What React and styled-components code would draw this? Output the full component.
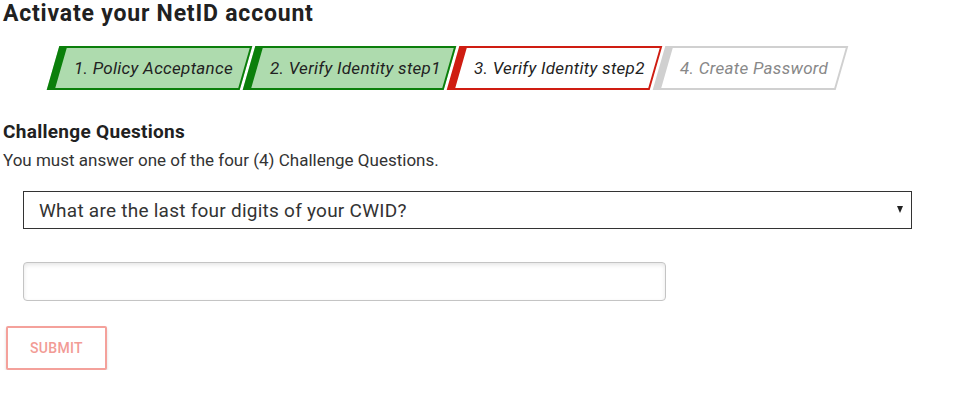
import React from "react";
import styled, { createGlobalStyle } from "styled-components";

const GlobalStyle = createGlobalStyle`
  body {
    margin: 0;
    background: #fff;
    font-family: Roboto, "Liberation Sans", Arial, sans-serif;
    color: #222;
  }
`;

const Page = styled.div`
  padding: 0 0 0 3px;
`;

const Title = styled.h1`
  margin: 0;
  font-size: 23px;
  line-height: 27px;
  font-weight: 700;
  letter-spacing: 0.8px;
  color: #212121;
`;

const Steps = styled.div`
  display: flex;
  gap: 3px;
  margin-top: 19px;
  padding-left: 50px;
`;

const palette = {
  done: { border: "#0b7f0b", bg: "#aedbae", text: "#222" },
  active: { border: "#cf1d12", bg: "#fff", text: "#222" },
  todo: { border: "#d0d0d0", bg: "#fff", text: "#888" },
};

const Step = styled.div`
  box-sizing: border-box;
  width: ${(p) => p.$width}px;
  height: 44px;
  display: flex;
  align-items: center;
  padding: 0 0 0 13px;
  transform: skewX(-16deg);
  border: 2px solid ${(p) => palette[p.$state].border};
  border-left-width: 8px;
  background: ${(p) => palette[p.$state].bg};
`;

const StepLabel = styled.span`
  display: block;
  transform: skewX(16deg);
  font-size: 17px;
  font-style: italic;
  letter-spacing: 0.3px;
  white-space: nowrap;
  color: ${(p) => palette[p.$state].text};
`;

const SectionTitle = styled.h2`
  margin: 31px 0 0;
  font-size: 19px;
  line-height: 22px;
  font-weight: 700;
  letter-spacing: 0.3px;
  color: #212121;
`;

const Hint = styled.p`
  margin: 7px 0 0;
  font-size: 17px;
  line-height: 20px;
  color: #333;
`;

const SelectWrap = styled.div`
  position: relative;
  width: 889px;
  margin: 21px 0 0 20px;
`;

const Select = styled.select`
  box-sizing: border-box;
  width: 100%;
  height: 38px;
  padding: 0 30px 0 15px;
  appearance: none;
  border: 1px solid #333;
  border-radius: 0;
  background: #fff;
  font-family: inherit;
  font-size: 19px;
  letter-spacing: 0.25px;
  color: #333;
  outline: none;
`;

const Arrow = styled.span`
  position: absolute;
  right: 9px;
  top: 15px;
  width: 0;
  height: 0;
  border-left: 3.5px solid transparent;
  border-right: 3.5px solid transparent;
  border-top: 7px solid #222;
  pointer-events: none;
`;

const Input = styled.input`
  display: block;
  box-sizing: border-box;
  width: 643px;
  height: 39px;
  margin: 33px 0 0 20px;
  border: 1px solid #c4c4c4;
  border-radius: 4px;
  box-shadow: inset 0 2px 4px rgba(0, 0, 0, 0.1);
  font-family: inherit;
  font-size: 16px;
  outline: none;
`;

const Submit = styled.button`
  display: block;
  box-sizing: border-box;
  width: 101px;
  height: 44px;
  margin: 25px 0 0 3px;
  border: 2px solid #f4a19b;
  border-radius: 2px;
  background: #fff;
  box-shadow: 0 2px 3px rgba(0, 0, 0, 0.15);
  font-family: inherit;
  font-size: 14px;
  font-weight: 500;
  color: #f29b95;
  letter-spacing: 0.3px;
`;

const steps = [
  { label: "1. Policy Acceptance", state: "done", width: 193 },
  { label: "2. Verify Identity step1", state: "done", width: 201 },
  { label: "3. Verify Identity step2", state: "active", width: 203 },
  { label: "4. Create Password", state: "todo", width: 183 },
];

const App = () => {
  return (
    <Page>
      <GlobalStyle />
      <Title>Activate your NetID account</Title>
      <Steps>
        {steps.map((s) => (
          <Step key={s.label} $state={s.state} $width={s.width}>
            <StepLabel $state={s.state}>{s.label}</StepLabel>
          </Step>
        ))}
      </Steps>
      <SectionTitle>Challenge Questions</SectionTitle>
      <Hint>You must answer one of the four (4) Challenge Questions.</Hint>
      <SelectWrap>
        <Select defaultValue="cwid">
          <option value="cwid">What are the last four digits of your CWID?</option>
        </Select>
        <Arrow />
      </SelectWrap>
      <Input type="text" />
      <Submit>SUBMIT</Submit>
    </Page>
  );
};

export default App;
